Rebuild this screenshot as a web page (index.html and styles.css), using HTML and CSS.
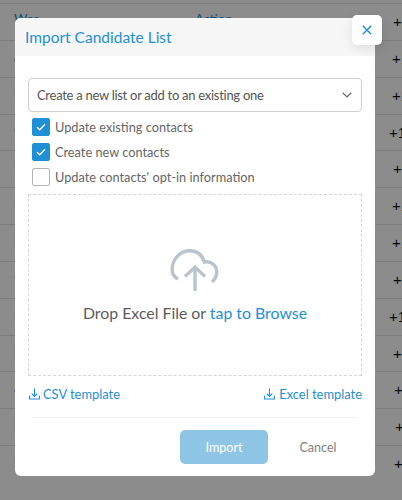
FILE: index.html
```html
<!DOCTYPE html>
<html lang="en">
<head>
<meta charset="utf-8">
<title>Import Candidate List</title>
<link rel="stylesheet" href="styles.css">
</head>
<body>
<div class="table">
  <div class="row head"><span class="name">Wes</span><span class="action">Action</span><span class="phone p3">+1</span></div>
  <div class="row"><span class="name">A</span><span class="phone p1">+1</span></div>
  <div class="row"><span class="name">B</span><span class="phone p1">+1</span></div>
  <div class="row"><span class="name">C</span><span class="phone p2">+1</span></div>
  <div class="row"><span class="name">D</span><span class="phone p3">+1</span></div>
  <div class="row"><span class="name">E</span><span class="phone p1">+1</span></div>
  <div class="row"><span class="name">F</span><span class="phone p1">+1</span></div>
  <div class="row"><span class="name">G</span><span class="phone p3">+1</span></div>
  <div class="row"><span class="name">H</span><span class="phone p2">+1</span></div>
  <div class="row"><span class="name">I</span><span class="phone p3">+1</span></div>
  <div class="row"><span class="name">J</span><span class="phone p4">+1</span></div>
  <div class="row"><span class="name">K</span><span class="phone p5">+1</span></div>
  <div class="row"><span class="name">L</span><span class="phone p4">+1</span></div>
</div>
<div class="overlay"></div>
<section class="modal">
  <header class="modal-head"><h2>Import Candidate List</h2></header>
  <button class="close" aria-label="Close">
    <svg width="10" height="10" viewBox="0 0 10 10"><path d="M.8 .8 9.200 9.200M9.200 .8 .8 9.200" fill="none" stroke="#1f8fd6" stroke-width="1.400"/></svg>
  </button>
  <div class="modal-body">
    <div class="select">
      <span>Create a new list or add to an existing one</span>
      <svg width="10" height="6" viewBox="0 0 10 6"><path d="M.7 .8 5 5 9.300 .8" fill="none" stroke="#666" stroke-width="1.200"/></svg>
    </div>
    <label class="check"><span class="box on"><svg width="10" height="8" viewBox="0 0 10 8"><path d="M1 4.200 3.700 6.800 9 1.200" fill="none" stroke="#fff" stroke-width="1.300"/></svg></span>Update existing contacts</label>
    <label class="check"><span class="box on"><svg width="10" height="8" viewBox="0 0 10 8"><path d="M1 4.200 3.700 6.800 9 1.200" fill="none" stroke="#fff" stroke-width="1.300"/></svg></span>Create new contacts</label>
    <label class="check"><span class="box"></span>Update contacts' opt-in information</label>
    <div class="drop">
      <svg class="cloud" width="52" height="44" viewBox="0 0 52 44" fill="none" stroke="#b9c4cd" stroke-width="3.400">
        <path d="M9 30C5 28 3 24.500 3.200 20 3.500 10 11 1.800 21 1.800 28 1.800 33 6 35.500 13 42 11.500 47.800 16.500 47.800 23 47.800 27 46 30 43 33"/>
        <path d="M26 42V19M16 27.500 26 18 36 27.500"/>
      </svg>
      <p class="drop-text">Drop Excel File or <a>tap to Browse</a></p>
    </div>
    <div class="templates">
      <a class="tpl csv"><svg width="11" height="12" viewBox="0 0 11 12" fill="none" stroke="#1f8fd6" stroke-width="1.100"><path d="M.6 7.500V11H10.400V7.500M5.500 .5V8.500M2.700 5.700 5.500 8.500 8.300 5.700"/></svg>CSV template</a>
      <a class="tpl"><svg width="11" height="12" viewBox="0 0 11 12" fill="none" stroke="#1f8fd6" stroke-width="1.100"><path d="M.6 7.500V11H10.400V7.500M5.500 .5V8.500M2.700 5.700 5.500 8.500 8.300 5.700"/></svg>Excel template</a>
    </div>
    <footer class="foot">
      <button class="import">Import</button>
      <button class="cancel">Cancel</button>
    </footer>
  </div>
</section>
</body>
</html>
```
FILE: styles.css
```css
* { box-sizing: border-box; }
html, body { margin: 0; height: 500px; overflow: hidden; }
body { font-family: Lato, sans-serif; background: #fff; position: relative; width: 402px; }
.table { padding-top: 3px; }
.row {
  height: 36.850px;
  border-top: 1px solid #e2e2e2;
  position: relative;
  font-size: 14px;
  line-height: 35px;
  white-space: nowrap;
}
.name { position: absolute; left: 14px; top: -2px; color: #1f8fd6; font-size: 13px; }
.action { position: absolute; left: 195px; top: -2px; color: #1f8fd6; font-size: 13px; }
.phone { position: absolute; left: 392.500px; top: 0; color: #111; font-family: "Liberation Sans", sans-serif; font-size: 15px; }
.p1 { left: 392px; }
.p2 { left: 389px; }
.p3 { left: 393px; }
.p4 { left: 394px; }
.p5 { left: 395px; }
.overlay { position: absolute; inset: 0; background: rgba(0, 0, 0, .45); }
.modal {
  position: absolute; left: 15px; top: 18px; width: 360px; height: 458px;
  background: #fff; border-radius: 6px;
}
.modal-head {
  height: 38px; background: #f7f7f7; border-radius: 6px 6px 0 0;
  padding: 0 10px; display: flex; align-items: center;
}
.modal-head h2 { margin: 0; font-size: 15.500px; font-weight: 400; color: #1f8fd6; }
.close {
  position: absolute; right: -7px; top: -3px; width: 30px; height: 30px;
  padding: 0; border: 0; background: #fff; border-radius: 5px;
  display: flex; align-items: center; justify-content: center;
  box-shadow: 0 4px 12px rgba(0, 0, 0, .1);
}
.modal-body { padding: 22px 13px 0; }
.select {
  height: 34px; border: 1px solid #cfcfcf; border-radius: 4px;
  padding: 0 9px 0 8px; display: flex; align-items: center; justify-content: space-between;
  font-size: 13px; letter-spacing: -.28px; color: #555; margin-bottom: 2px;
}
.check {
  display: flex; align-items: center; gap: 5px; height: 25px; padding-left: 4px;
  font-size: 12.750px; color: #666;
}
.box {
  width: 18px; height: 18px; border-radius: 2px; border: 1px solid #b5b5b5;
  display: flex; align-items: center; justify-content: center; background: #fff; flex: none;
}
.box.on { background: #1f8fd6; border-color: #1f8fd6; }
.drop {
  height: 182px; border: 1px dashed #d5d5dc; margin-top: 5px;
  display: flex; flex-direction: column; align-items: center; padding-top: 54px;
}
.cloud { display: block; }
.drop-text { margin: 10px 0 0; font-size: 15.850px; color: #5c5c5c; }
.drop-text a { color: #1f8fd6; }
.templates { display: flex; justify-content: space-between; margin-top: 10px; }
.tpl { display: flex; align-items: center; gap: 4px; font-size: 12.900px; color: #1f8fd6; line-height: 16px; }
.csv svg { margin-left: 1px; margin-right: -1px; }
.foot {
  margin: 15px 5px 0 4px; border-top: 1px solid #eee; padding-top: 12px;
  display: flex; justify-content: flex-start; padding-left: 148px;
}
.foot button { font-family: Lato, sans-serif; font-size: 12.600px; border: 0; height: 34px; padding: 0; }
.import { width: 88px; background: #8fc6e6; color: #fff; border-radius: 5px; flex: none; }
.cancel { width: 100px; background: none; color: #808080; flex: none; }
```
